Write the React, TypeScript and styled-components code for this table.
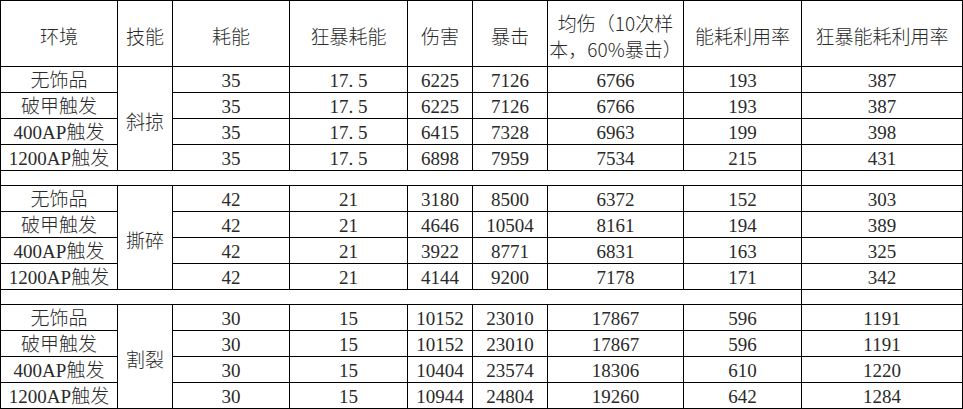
import React from 'react';
import styled, { createGlobalStyle } from 'styled-components';

const GlobalStyle = createGlobalStyle`
  html, body {
    margin: 0;
    padding: 0;
    background: #ffffff;
  }
  body {
    font-family: 'Liberation Serif', 'Noto Sans CJK SC', serif;
    color: #2a2a2a;
  }
`;

type Row = {
  env: string;
  dmg: string;
  crit: string;
  avg: string;
  eff: string;
  rageEff: string;
};

type Group = {
  skill: string;
  cost: string;
  rageCost: string;
  rows: Row[];
};

const widths = [117, 55, 117, 118, 65, 75, 136, 118, 161];

const headers = ['环境', '技能', '耗能', '狂暴耗能', '伤害', '暴击'];

const groups: Group[] = [
  {
    skill: '斜掠',
    cost: '35',
    rageCost: '17.5',
    rows: [
      { env: '无饰品', dmg: '6225', crit: '7126', avg: '6766', eff: '193', rageEff: '387' },
      { env: '破甲触发', dmg: '6225', crit: '7126', avg: '6766', eff: '193', rageEff: '387' },
      { env: '400AP触发', dmg: '6415', crit: '7328', avg: '6963', eff: '199', rageEff: '398' },
      { env: '1200AP触发', dmg: '6898', crit: '7959', avg: '7534', eff: '215', rageEff: '431' },
    ],
  },
  {
    skill: '撕碎',
    cost: '42',
    rageCost: '21',
    rows: [
      { env: '无饰品', dmg: '3180', crit: '8500', avg: '6372', eff: '152', rageEff: '303' },
      { env: '破甲触发', dmg: '4646', crit: '10504', avg: '8161', eff: '194', rageEff: '389' },
      { env: '400AP触发', dmg: '3922', crit: '8771', avg: '6831', eff: '163', rageEff: '325' },
      { env: '1200AP触发', dmg: '4144', crit: '9200', avg: '7178', eff: '171', rageEff: '342' },
    ],
  },
  {
    skill: '割裂',
    cost: '30',
    rageCost: '15',
    rows: [
      { env: '无饰品', dmg: '10152', crit: '23010', avg: '17867', eff: '596', rageEff: '1191' },
      { env: '破甲触发', dmg: '10152', crit: '23010', avg: '17867', eff: '596', rageEff: '1191' },
      { env: '400AP触发', dmg: '10404', crit: '23574', avg: '18306', eff: '610', rageEff: '1220' },
      { env: '1200AP触发', dmg: '10944', crit: '24804', avg: '19260', eff: '642', rageEff: '1284' },
    ],
  },
];

const Sheet = styled.table`
  width: 962px;
  table-layout: fixed;
  border-collapse: collapse;
  font-size: 19px;
  font-weight: 300;
`;

const HeadRow = styled.tr`
  height: 66px;
`;

const HeadCell = styled.th`
  border: 1px solid #000;
  padding: 5px 0 0 0;
  font-weight: 300;
  font-family: 'Noto Sans CJK SC', sans-serif;
  line-height: 26px;
  text-align: center;
  vertical-align: middle;
  white-space: nowrap;
`;

const DataRow = styled.tr`
  height: 26px;
`;

const Cell = styled.td`
  border: 1px solid #000;
  padding: 3px 0 0 0;
  line-height: 22px;
  text-align: center;
  vertical-align: middle;
  white-space: nowrap;
`;

const SkillCell = styled(Cell)`
  padding-top: 8px;
`;

const GapRow = styled.tr`
  height: 15px;
`;

const GapCell = styled.td`
  border: 1px solid #000;
  padding: 0;
`;

const Dot = styled.span`
  display: inline-block;
  width: 0.5em;
  text-align: left;
`;

const Decimal = ({ value }: { value: string }) => {
  const [whole, frac] = value.split('.');
  if (frac === undefined) return <>{value}</>;
  return (
    <>
      {whole}
      <Dot>.</Dot>
      {frac}
    </>
  );
};

const App = () => {
  return (
    <>
      <GlobalStyle />
      <Sheet>
        <colgroup>
          {widths.map((w, i) => (
            <col key={i} style={{ width: w }} />
          ))}
        </colgroup>
        <tbody>
          <HeadRow>
            {headers.map((h) => (
              <HeadCell key={h}>{h}</HeadCell>
            ))}
            <HeadCell>
              均伤（10次样
              <br />
              本，60%暴击）
            </HeadCell>
            <HeadCell>能耗利用率</HeadCell>
            <HeadCell>狂暴能耗利用率</HeadCell>
          </HeadRow>
          {groups.map((g, gi) => (
            <React.Fragment key={g.skill}>
              {gi > 0 && (
                <GapRow>
                  <GapCell colSpan={8} />
                  <GapCell />
                </GapRow>
              )}
              {g.rows.map((r, ri) => (
                <DataRow key={ri}>
                  <Cell>{r.env}</Cell>
                  {ri === 0 && <SkillCell rowSpan={4}>{g.skill}</SkillCell>}
                  <Cell>{g.cost}</Cell>
                  <Cell>
                    <Decimal value={g.rageCost} />
                  </Cell>
                  <Cell>{r.dmg}</Cell>
                  <Cell>{r.crit}</Cell>
                  <Cell>{r.avg}</Cell>
                  <Cell>{r.eff}</Cell>
                  <Cell>{r.rageEff}</Cell>
                </DataRow>
              ))}
            </React.Fragment>
          ))}
        </tbody>
      </Sheet>
    </>
  );
};

export default App;
